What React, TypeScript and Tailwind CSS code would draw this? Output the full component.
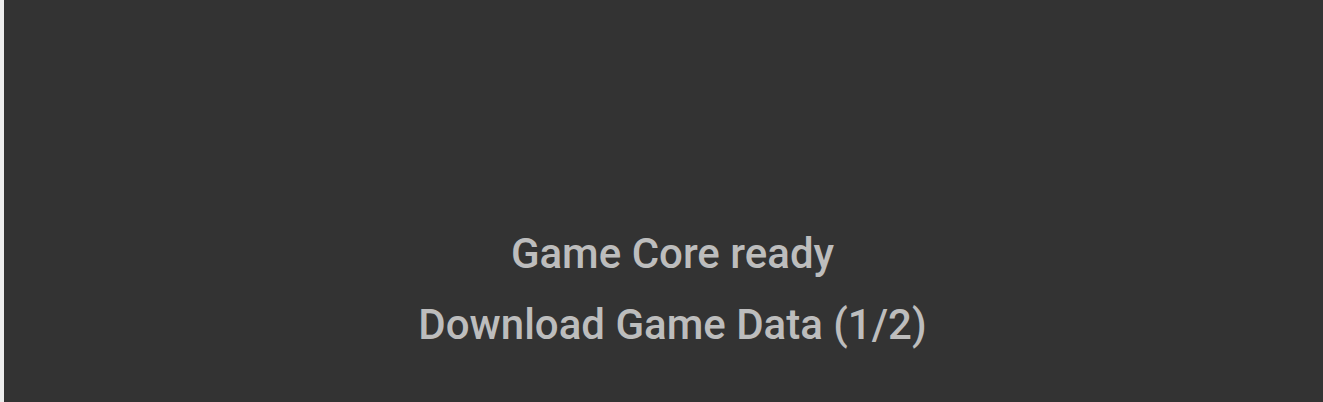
export default function App() {
    return (
        <div className="w-full h-[402px] bg-[#333333] border-l-4 border-[#eeeeee] overflow-hidden">
            <div className="flex flex-col items-center pt-[218px] pl-[18px] font-['Roboto',sans-serif] font-medium text-[42px] leading-[71px] text-[#bdbdbd]">
                <div>Game Core ready</div>
                <div>Download Game Data (1/2)</div>
            </div>
        </div>
    );
}
